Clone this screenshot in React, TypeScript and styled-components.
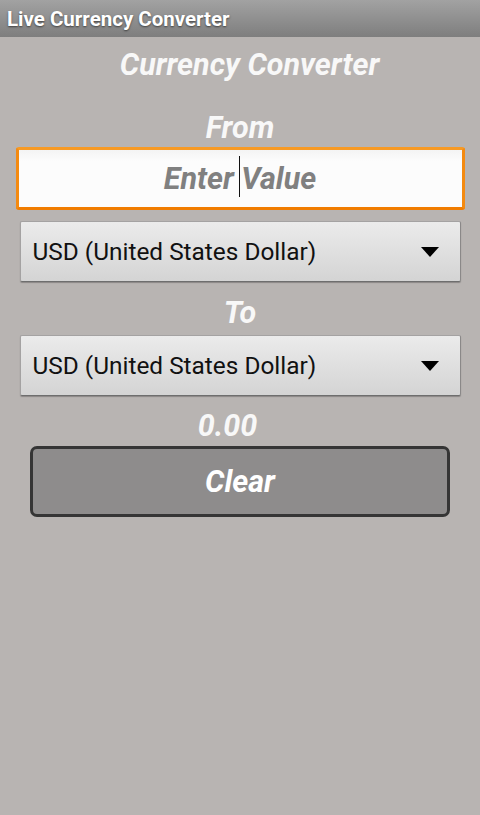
import { useState } from 'react';
import styled, { createGlobalStyle } from 'styled-components';

const GlobalStyle = createGlobalStyle`
  html, body {
    margin: 0;
    padding: 0;
    background: #b8b4b2;
  }
  body {
    font-family: Roboto, "Noto Sans", "DejaVu Sans", sans-serif;
  }
`;

const Screen = styled.div`
  width: 480px;
  min-height: 815px;
  background: #b8b4b2;
  display: flex;
  flex-direction: column;
`;

const TitleBar = styled.header`
  height: 37px;
  box-sizing: border-box;
  padding: 0 7px;
  display: flex;
  align-items: center;
  background: linear-gradient(#a2a2a2, #7e7e7e);
  color: #fff;
  font-size: 20.5px;
  font-weight: 700;
  text-shadow: 0 1px 2px rgba(0, 0, 0, 0.55);
`;

const Content = styled.main`
  display: flex;
  flex-direction: column;
  align-items: center;
  padding: 10px 0 0;
`;

// $lean pushes the centred label sideways (positive = right)
const Heading = styled.h2<{ $gap: number; $lean?: number }>`
  margin: 0 ${(p) => Math.max(0, -(p.$lean ?? 0) * 2)}px ${(p) => p.$gap}px
    ${(p) => Math.max(0, (p.$lean ?? 0) * 2)}px;
  height: 36px;
  line-height: 36px;
  font-size: 30.5px;
  font-weight: 700;
  font-style: italic;
  color: #f8f8f8;
`;

const Field = styled.div`
  position: relative;
  margin: 1px 0 11px;
`;

const ValueInput = styled.input`
  display: block;
  box-sizing: border-box;
  width: 449px;
  height: 63px;
  margin: 0;
  border: 3px solid #f48a10;
  border-color: #f79a24 #f48a10 #f07c00;
  border-radius: 3px;
  background: linear-gradient(#f4f4f4, #fcfcfc 20%, #fcfcfc);
  text-align: center;
  font-family: Roboto, "Noto Sans", sans-serif;
  font-size: 30.5px;
  font-weight: 700;
  font-style: italic;
  color: #333;
  outline: none;
  caret-color: #000;
  &::placeholder {
    color: #808080;
  }
`;

const TextCaret = styled.span`
  position: absolute;
  left: 223px;
  top: 9px;
  width: 1px;
  height: 41px;
  background: #111;
  pointer-events: none;
`;

const Select = styled.div<{ $gap: number }>`
  box-sizing: border-box;
  width: 441px;
  height: 61px;
  margin: 0 0 ${(p) => p.$gap}px;
  padding: 0 21px 0 12px;
  display: flex;
  align-items: center;
  justify-content: space-between;
  background: linear-gradient(#ebebeb, #d4d4d4);
  border: 1px solid #a4a2a2;
  border-bottom-color: #6e6e6e;
  border-right-color: #8a8888;
  border-radius: 2px;
  box-shadow: 0 1px 1px rgba(0, 0, 0, 0.25);
  color: #111;
  font-size: 24.4px;
`;

const Caret = styled.span`
  width: 0;
  height: 0;
  border-left: 9px solid transparent;
  border-right: 9px solid transparent;
  border-top: 10px solid #000;
`;

const ClearButton = styled.button`
  box-sizing: border-box;
  width: 420px;
  height: 71px;
  margin-top: 2px;
  border: 3px solid #353535;
  border-radius: 7px;
  background: #8e8c8c;
  color: #fff;
  font-family: Roboto, "Noto Sans", sans-serif;
  font-size: 30.5px;
  font-weight: 700;
  font-style: italic;
  cursor: pointer;
`;

const currency = 'USD (United States Dollar)';

const App = () => {
  const [value, setValue] = useState('');
  const amount = parseFloat(value);
  const result = isNaN(amount) ? '0.00' : amount.toFixed(2);

  return (
    <Screen>
      <GlobalStyle />
      <TitleBar>Live Currency Converter</TitleBar>
      <Content>
        <Heading $gap={27} $lean={9.5}>Currency Converter</Heading>
        <Heading $gap={0}>From</Heading>
        <Field>
          <ValueInput
            placeholder="Enter Value"
            value={value}
            onChange={(e) => setValue(e.target.value)}
          />
          {value === '' && <TextCaret />}
        </Field>
        <Select $gap={13}>
          <span>{currency}</span>
          <Caret />
        </Select>
        <Heading $gap={4}>To</Heading>
        <Select $gap={12}>
          <span>{currency}</span>
          <Caret />
        </Select>
        <Heading $gap={0} $lean={-12.5}>{result}</Heading>
        <ClearButton onClick={() => setValue('')}>Clear</ClearButton>
      </Content>
    </Screen>
  );
};

export default App;
